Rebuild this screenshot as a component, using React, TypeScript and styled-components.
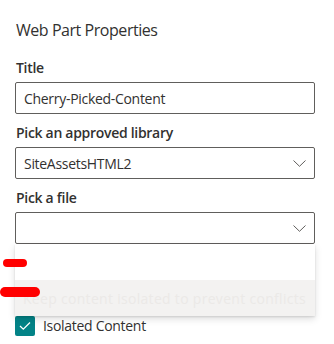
import React from "react";
import styled, { createGlobalStyle } from "styled-components";

const Global = createGlobalStyle`
  html, body { margin: 0; padding: 0; background: #ffffff; }
  body { font-family: "Open Sans", "Noto Sans", sans-serif; color: #323130; -webkit-font-smoothing: antialiased; letter-spacing: -0.3px; }
  * { box-sizing: border-box; }
`;

const Panel = styled.div`
  position: relative;
  width: 334px;
  height: 344px;
  padding: 20px 19px 0 15px;
  overflow: hidden;
`;

const Heading = styled.div`
  font-size: 16px;
  line-height: 20px;
  font-weight: 400;
  letter-spacing: -0.45px;
  color: #323130;
  padding-left: 1px;
`;

const Field = styled.div<{ $top?: number }>`
  position: relative;
  margin-top: ${(p) => p.$top ?? 4}px;
`;

const Label = styled.div`
  font-size: 14px;
  line-height: 20px;
  font-weight: 600;
  color: #323130;
  padding: 5px 0 4px 1px;
`;

const Box = styled.div`
  height: 32px;
  border: 1px solid #605e5c;
  border-radius: 2px;
  display: flex;
  align-items: center;
  padding: 0 8px;
  font-size: 14px;
  color: #323130;
  background: #fff;
`;

const BoxText = styled.span`
  flex: 1;
  white-space: nowrap;
  overflow: hidden;
`;

const Caret = styled.svg`
  width: 13px;
  height: 7px;
  flex: none;
`;

const Callout = styled.div`
  position: absolute;
  top: 100%;
  left: 0;
  width: 300px;
  background: #fff;
  box-shadow: 0 3.2px 7.2px rgba(0, 0, 0, 0.132), 0 0.6px 1.8px rgba(0, 0, 0, 0.108);
  z-index: 2;
`;

const Option = styled.div<{ $hover?: boolean }>`
  height: 36px;
  display: flex;
  align-items: center;
  padding: 0 8px;
  font-size: 14px;
  letter-spacing: 0.3px;
  white-space: nowrap;
  overflow: hidden;
  background: ${(p) => (p.$hover ? "#f3f2f1" : "#ffffff")};
  color: #ebe9e7;
`;

const CheckRow = styled.label`
  display: flex;
  align-items: center;
  gap: 8px;
  margin-top: 72px;
  font-size: 14px;
  line-height: 20px;
  color: #323130;
`;

const CheckBox = styled.span`
  width: 20px;
  height: 20px;
  border-radius: 2px;
  background: #038387;
  display: flex;
  align-items: center;
  justify-content: center;
`;

const Scribble = styled.div<{ $x: number; $y: number; $w: number; $h: number }>`
  position: absolute;
  left: ${(p) => p.$x}px;
  top: ${(p) => p.$y}px;
  width: ${(p) => p.$w}px;
  height: ${(p) => p.$h}px;
  border-radius: ${(p) => p.$h / 2}px;
  background: #ff0000;
  z-index: 3;
`;

const ChevronDown = () => (
  <Caret viewBox="0 0 13 7">
    <polyline points="0.5,0.5 6.5,6.3 12.5,0.5" fill="none" stroke="#605e5c" strokeWidth="1" />
  </Caret>
);

export default function App() {
  return (
    <>
      <Global />
      <Panel>
        <Heading>Web Part Properties</Heading>
        <Field $top={13}>
          <Label>Title</Label>
          <Box>
            <BoxText>Cherry-Picked-Content</BoxText>
          </Box>
        </Field>
        <Field>
          <Label>Pick an approved library</Label>
          <Box>
            <BoxText>SiteAssetsHTML2</BoxText>
            <ChevronDown />
          </Box>
        </Field>
        <Field>
          <Label>Pick a file</Label>
          <Box>
            <BoxText></BoxText>
            <ChevronDown />
          </Box>
          <Callout>
            <Option />
            <Option $hover>Keep content isolated to prevent conflicts</Option>
          </Callout>
        </Field>
        <CheckRow>
          <CheckBox>
            <svg width="12" height="10" viewBox="0 0 12 10">
              <polyline points="1,5 4.3,8.2 11,1.5" fill="none" stroke="#fff" strokeWidth="1.3" />
            </svg>
          </CheckBox>
          Isolated Content
        </CheckRow>
        <Scribble $x={3} $y={259} $w={24} $h={8} />
        <Scribble $x={0} $y={287} $w={40} $h={10} />
      </Panel>
    </>
  );
}
